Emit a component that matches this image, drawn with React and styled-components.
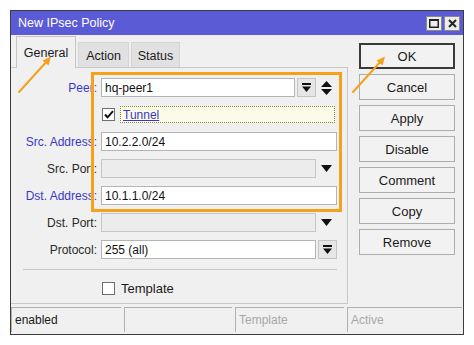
import React from "react";
import styled, { createGlobalStyle } from "styled-components";

const GlobalStyle = createGlobalStyle`
  body {
    margin: 0;
    background: #ffffff;
    font-family: "Liberation Sans", Arial, sans-serif;
  }
`;

const Page = styled.div`
  position: relative;
  width: 474px;
  height: 345px;
  padding: 10px 0 0 10px;
  box-sizing: border-box;
`;

const Window = styled.div`
  position: relative;
  width: 454px;
  height: 325px;
  box-sizing: border-box;
  border: 1px solid #3c3c3c;
  background: #f0f0f0;
  display: flex;
  flex-direction: column;
`;

const TitleBar = styled.div`
  height: 24px;
  background: #5b5bd6;
  color: #ffffff;
  font-size: 12.5px;
  display: flex;
  align-items: center;
  justify-content: space-between;
  padding: 0 3px 0 7px;
`;

const TitleButtons = styled.div`
  display: flex;
  gap: 2px;
`;

const TitleButton = styled.div`
  width: 16px;
  height: 15px;
  box-sizing: border-box;
  background: #ececec;
  border: 1px solid #8a8a8a;
  display: flex;
  align-items: center;
  justify-content: center;
`;

const Main = styled.div`
  display: flex;
  height: 269px;
`;

const LeftPane = styled.div`
  width: 337px;
  display: flex;
  flex-direction: column;
`;

const TabRow = styled.div`
  display: flex;
  align-items: flex-end;
  gap: 2px;
  height: 32px;
  padding-left: 5px;
`;

const Tab = styled.div`
  width: ${(p) => p.$w}px;
  height: ${(p) => (p.$active ? 32 : 25)}px;
  box-sizing: border-box;
  display: flex;
  align-items: center;
  justify-content: center;
  font-size: 12.5px;
  color: #1a1a1a;
  background: ${(p) => (p.$active ? "#f0f0f0" : "#e1e1e1")};
  border: 1px solid ${(p) => (p.$active ? "#c4c4c4" : "#d4d4d4")};
  border-bottom: none;
  margin-bottom: ${(p) => (p.$active ? "-1px" : "0")};
  position: relative;
  padding-top: ${(p) => (p.$active ? "0" : "2px")};
`;

const Panel = styled.div`
  flex: 1;
  border-top: 1px solid #c8c8c8;
  border-right: 1px solid #c8c8c8;
  border-bottom: 1px solid #c8c8c8;
  padding-top: 10px;
  display: flex;
  flex-direction: column;
`;

const Form = styled.div`
  display: grid;
  grid-template-columns: 86px 236px;
  column-gap: 4px;
  row-gap: 8px;
  grid-auto-rows: 19px;
`;

const Label = styled.div`
  font-size: 12px;
  text-align: right;
  align-self: center;
  color: ${(p) => (p.$set ? "#3838c8" : "#2a2a2a")};
  white-space: nowrap;
`;

const FieldLine = styled.div`
  display: flex;
  align-items: stretch;
  height: 19px;
`;

const Input = styled.div`
  width: ${(p) => p.$w}px;
  box-sizing: border-box;
  background: ${(p) => (p.$disabled ? "#ececec" : "#ffffff")};
  border: 1px solid ${(p) => (p.$disabled ? "#c6c6c6" : "#b4b4b4")};
  font-size: 12px;
  color: #111;
  padding: 0 3px;
  display: flex;
  align-items: center;
`;

const SmallButton = styled.div`
  width: 19px;
  margin-left: 2px;
  box-sizing: border-box;
  background: #e6e6e6;
  border: 1px solid #c4c4c4;
  display: flex;
  align-items: center;
  justify-content: center;
`;

const IconSlot = styled.div`
  flex: 1;
  display: flex;
  align-items: center;
  justify-content: center;
`;

const CheckRow = styled.div`
  display: flex;
  align-items: center;
  gap: 5px;
  padding-left: 1px;
`;

const CheckBox = styled.div`
  width: 13px;
  height: 13px;
  box-sizing: border-box;
  background: #ffffff;
  border: 1px solid #6e6e6e;
  display: flex;
  align-items: center;
  justify-content: center;
  flex: none;
`;

const FocusLabel = styled.div`
  flex: 0 0 215px;
  height: 17px;
  box-sizing: border-box;
  border: 1px dotted #8a8a3c;
  background: #fbfbe8;
  font-size: 12px;
  color: #3838c8;
  text-decoration: underline;
  display: flex;
  align-items: center;
  padding-left: 2px;
`;

const Separator = styled.div`
  height: 1px;
  background: #c8c8c8;
  margin: 10px 10px 0 12px;
`;

const TemplateRow = styled.div`
  display: flex;
  align-items: center;
  gap: 6px;
  margin: 11px 0 0 91px;
  font-size: 13px;
  color: #1a1a1a;
`;

const RightPane = styled.div`
  display: flex;
  flex-direction: column;
  gap: 5px;
  padding: 8px 0 0 11px;
`;

const Button = styled.div`
  width: 96px;
  height: 26px;
  box-sizing: border-box;
  background: #f2f2f2;
  border: ${(p) => (p.$default ? "2px solid #3a3a3a" : "1px solid #adadad")};
  font-size: 13px;
  color: #1a1a1a;
  display: flex;
  align-items: center;
  justify-content: center;
`;

const StatusBar = styled.div`
  display: flex;
  gap: 3px;
  margin-top: 3px;
  height: 25px;
`;

const StatusCell = styled.div`
  width: ${(p) => p.$w}px;
  box-sizing: border-box;
  border-top: 1px solid #b0b0b0;
  border-left: 1px solid #b0b0b0;
  font-size: 12px;
  color: ${(p) => (p.$dim ? "#a8a8a8" : "#1a1a1a")};
  display: flex;
  align-items: center;
  padding-left: 3px;
`;

const Highlight = styled.div`
  position: absolute;
  left: 80px;
  top: 61px;
  width: 251px;
  height: 140px;
  box-sizing: border-box;
  border: 3px solid #f5a11c;
  pointer-events: none;
`;

const Overlay = styled.svg`
  position: absolute;
  left: 0;
  top: 0;
  pointer-events: none;
`;

const DropTri = () => (
  <svg width="11" height="7" viewBox="0 0 11 7">
    <path d="M0 0h11L5.5 7z" fill="#111" />
  </svg>
);

const BarDown = () => (
  <svg width="9" height="9" viewBox="0 0 9 9">
    <rect x="0" y="0" width="9" height="2" fill="#111" />
    <path d="M0 3.5h9L4.5 9z" fill="#111" />
  </svg>
);

const UpDown = () => (
  <svg width="11" height="14" viewBox="0 0 11 14">
    <path d="M5.5 0L11 6H0z" fill="#111" />
    <path d="M0 8h11L5.5 14z" fill="#111" />
  </svg>
);

const Tick = () => (
  <svg width="10" height="9" viewBox="0 0 10 9">
    <path d="M1 4.5l2.6 2.8L9 1.2" stroke="#111" strokeWidth="2" fill="none" />
  </svg>
);

export default function App() {
  return (
    <Page>
      <GlobalStyle />
      <Window>
        <TitleBar>
          <span>New IPsec Policy</span>
          <TitleButtons>
            <TitleButton>
              <svg width="10" height="9" viewBox="0 0 10 9">
                <rect x="0.75" y="0.75" width="8.5" height="7.5" stroke="#222" strokeWidth="1.5" fill="none" />
                <rect x="0" y="0" width="10" height="2" fill="#222" />
              </svg>
            </TitleButton>
            <TitleButton>
              <svg width="9" height="9" viewBox="0 0 9 9">
                <path d="M1 1l7 7M8 1l-7 7" stroke="#222" strokeWidth="2" />
              </svg>
            </TitleButton>
          </TitleButtons>
        </TitleBar>

        <Main>
          <LeftPane>
            <TabRow>
              <Tab $active $w={60}>General</Tab>
              <Tab $w={51}>Action</Tab>
              <Tab $w={49}>Status</Tab>
            </TabRow>
            <Panel>
              <Form>
                <Label $set>Peer:</Label>
                <FieldLine>
                  <Input $w={194}>hq-peer1</Input>
                  <SmallButton><BarDown /></SmallButton>
                  <IconSlot><UpDown /></IconSlot>
                </FieldLine>

                <div />
                <CheckRow>
                  <CheckBox><Tick /></CheckBox>
                  <FocusLabel>Tunnel</FocusLabel>
                </CheckRow>

                <Label $set>Src. Address:</Label>
                <FieldLine>
                  <Input $w={236}>10.2.2.0/24</Input>
                </FieldLine>

                <Label>Src. Port:</Label>
                <FieldLine>
                  <Input $w={215} $disabled />
                  <IconSlot><DropTri /></IconSlot>
                </FieldLine>

                <Label $set>Dst. Address:</Label>
                <FieldLine>
                  <Input $w={236}>10.1.1.0/24</Input>
                </FieldLine>

                <Label>Dst. Port:</Label>
                <FieldLine>
                  <Input $w={215} $disabled />
                  <IconSlot><DropTri /></IconSlot>
                </FieldLine>

                <Label>Protocol:</Label>
                <FieldLine>
                  <Input $w={215}>255 (all)</Input>
                  <SmallButton><BarDown /></SmallButton>
                </FieldLine>
              </Form>
              <Separator />
              <TemplateRow>
                <CheckBox />
                Template
              </TemplateRow>
            </Panel>
          </LeftPane>

          <RightPane>
            <Button $default>OK</Button>
            <Button>Cancel</Button>
            <Button>Apply</Button>
            <Button>Disable</Button>
            <Button>Comment</Button>
            <Button>Copy</Button>
            <Button>Remove</Button>
          </RightPane>
        </Main>

        <StatusBar>
          <StatusCell $w={110}>enabled</StatusCell>
          <StatusCell $w={108} />
          <StatusCell $w={109} $dim>Template</StatusCell>
          <StatusCell $w={115} $dim>Active</StatusCell>
        </StatusBar>

        <Highlight />
      </Window>

      <Overlay width="474" height="345" viewBox="0 0 474 345">
        <g stroke="#f5a11c" strokeWidth="2" fill="none" strokeLinecap="round">
          <path d="M19 92L48 60" />
          <path d="M353 92L382 60" />
        </g>
        <g fill="#f5a11c">
          <path d="M51 56.5L42.5 60.5L48.5 65.5z" />
          <path d="M385 56.5L376.5 60.5L382.5 65.5z" />
        </g>
      </Overlay>
    </Page>
  );
}
